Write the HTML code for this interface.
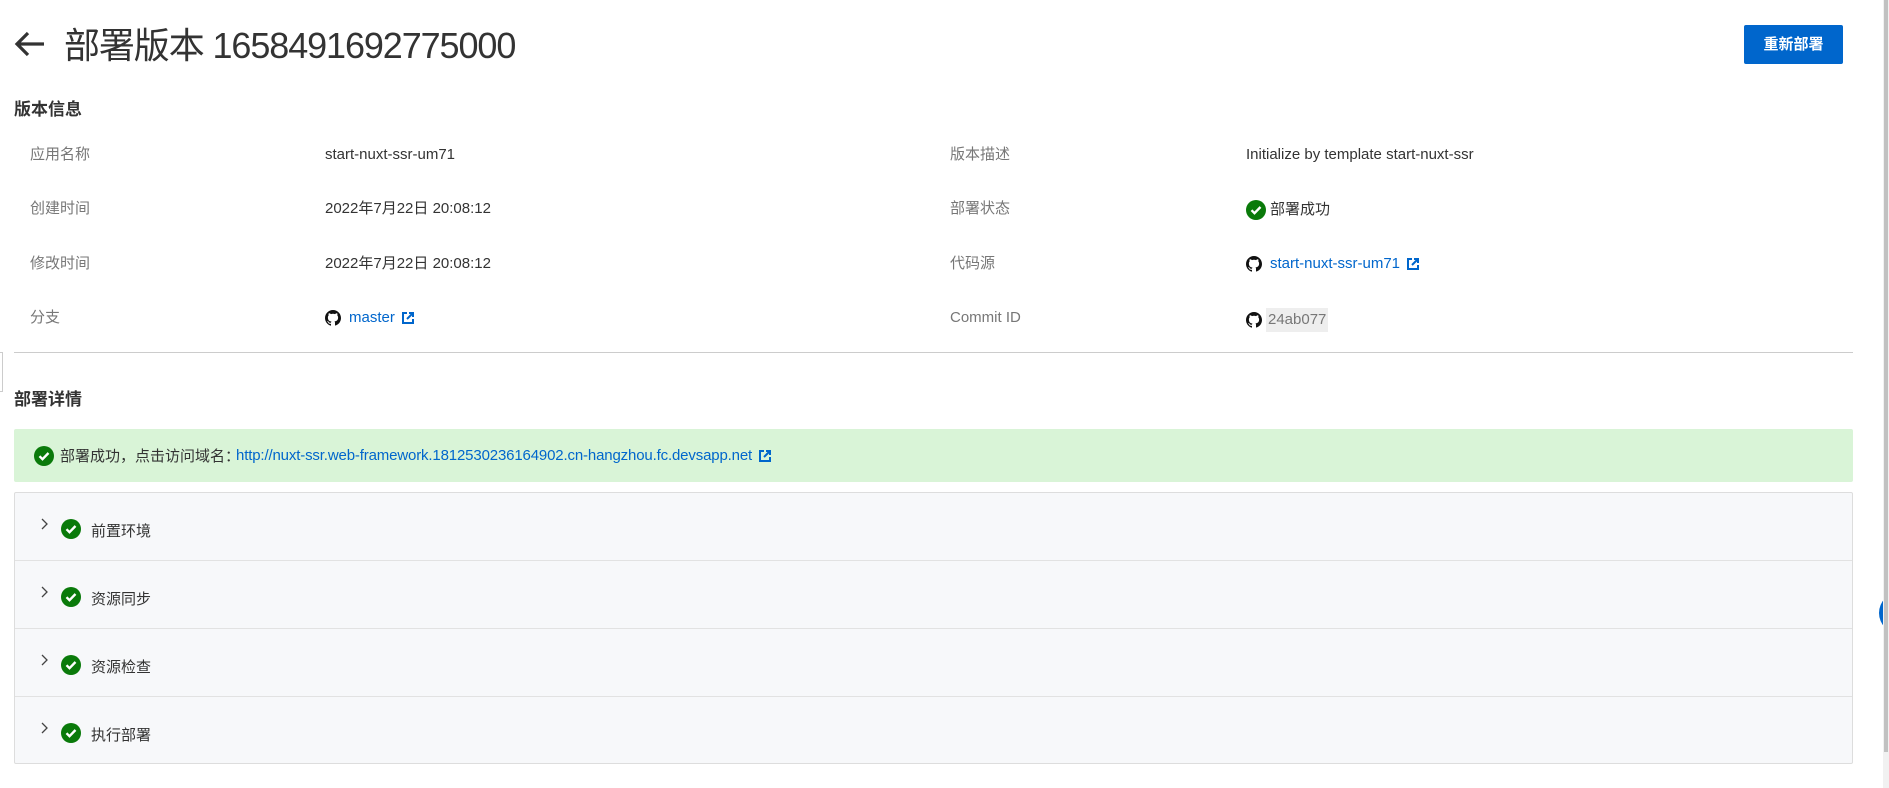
<!DOCTYPE html>
<html><head><meta charset="utf-8"><style>
*{box-sizing:border-box;margin:0;padding:0}
body{width:1889px;height:788px;overflow:hidden;background:#fff;font-family:"Liberation Sans","Noto Sans CJK SC",sans-serif;color:#333;position:relative}
.abs{position:absolute}
.title{left:64px;top:21px;font-size:36px;color:#333;line-height:50px;letter-spacing:-1.1px}
.btn{left:1744px;top:25px;width:99px;height:39px;background:#0066cc;color:#fff;font-size:15px;font-weight:bold;text-align:center;line-height:39px;border-radius:2px}
.h{font-size:17px;font-weight:bold;color:#333;left:14px}
.lbl{font-size:15px;color:#777;line-height:20px}
.val{font-size:15px;color:#333;line-height:20px;display:flex;align-items:center;gap:6px}
a{color:#0066cc;text-decoration:none}
.gh{width:16px;height:16px}
.ext{width:14px;height:14px}
.ok{width:20px;height:20px}
.acc{left:14px;top:492px;width:1839px;height:272px;border:1px solid #ddd;background:#f7f8fa;border-radius:2px}
.row{height:68px;border-bottom:1px solid #e2e2e2;position:relative}
.row:last-child{border-bottom:none}
.row .chev{position:absolute;left:24px;top:24px}
.row .ok{position:absolute;left:46px;top:26px}
.row span.t{position:absolute;left:76px;top:27px;font-size:15px;color:#333}
</style></head><body>
<svg class="abs" style="left:14px;top:30px" width="32" height="28" viewBox="0 0 32 28"><path d="M30 14H4M14 3L3 14l11 11" stroke="#333" stroke-width="3.2" fill="none"/></svg>
<div class="abs title">部署版本 1658491692775000</div>
<div class="abs btn">重新部署</div>
<div class="abs h" style="top:95px">版本信息</div>

<svg width="0" height="0" style="position:absolute"><defs>
<symbol id="gh" viewBox="0 0 16 16"><path fill="#111" d="M8 0C3.6 0 0 3.6 0 8c0 3.5 2.3 6.5 5.5 7.6.4.1.5-.2.5-.4v-1.4c-2.2.5-2.7-1-2.7-1-.4-.9-.9-1.2-.9-1.2-.7-.5.1-.5.1-.5.8.1 1.2.8 1.2.8.7 1.2 1.900.9 2.300.7.1-.5.3-.9.5-1.1-1.8-.2-3.6-.9-3.6-4 0-.9.3-1.6.8-2.1-.1-.2-.4-1 .1-2.1 0 0 .7-.2 2.2.8.6-.2 1.3-.3 2-.3s1.4.1 2 .3c1.5-1 2.2-.8 2.2-.8.4 1.1.2 1.9.1 2.1.5.6.8 1.3.8 2.1 0 3.1-1.9 3.700-3.6 3.900.3.3.5.8.5 1.5v2.2c0 .2.1.5.6.4C13.7 14.5 16 11.5 16 8c0-4.4-3.6-8-8-8z"/></symbol>
<symbol id="ext" viewBox="0 0 14 14"><path d="M6 2H2v10h10V8M8 2h4v4M12 2L6 8" stroke="#0066cc" stroke-width="2" fill="none"/></symbol>
<symbol id="ok" viewBox="0 0 20 20"><circle cx="10" cy="10" r="10" fill="#0a7a0a"/><path d="M5.5 10.2l3 3 6-6.2" stroke="#fff" stroke-width="2.4" fill="none"/></symbol>
<symbol id="chev" viewBox="0 0 10 14"><path d="M3 2l5 5-5 5" stroke="#444" stroke-width="1.3" fill="none"/></symbol>
</defs></svg>

<div class="abs lbl" style="left:30px;top:145px">应用名称</div>
<div class="abs val" style="left:325px;top:145px">start-nuxt-ssr-um71</div>
<div class="abs lbl" style="left:30px;top:199px">创建时间</div>
<div class="abs val" style="left:325px;top:199px">2022年7月22日 20:08:12</div>
<div class="abs lbl" style="left:30px;top:254px">修改时间</div>
<div class="abs val" style="left:325px;top:254px">2022年7月22日 20:08:12</div>
<div class="abs lbl" style="left:30px;top:308px">分支</div>
<div class="abs val" style="left:325px;top:308px"><svg class="gh"><use href="#gh"/></svg><a style="margin-left:2px">master</a><svg class="ext"><use href="#ext"/></svg></div>

<div class="abs lbl" style="left:950px;top:145px">版本描述</div>
<div class="abs val" style="left:1246px;top:145px">Initialize by template start-nuxt-ssr</div>
<div class="abs lbl" style="left:950px;top:199px">部署状态</div>
<div class="abs val" style="left:1246px;top:200px;gap:4px"><svg class="ok"><use href="#ok"/></svg>部署成功</div>
<div class="abs lbl" style="left:950px;top:254px">代码源</div>
<div class="abs val" style="left:1246px;top:254px"><svg class="gh"><use href="#gh"/></svg><a style="margin-left:2px">start-nuxt-ssr-um71</a><svg class="ext"><use href="#ext"/></svg></div>
<div class="abs lbl" style="left:950px;top:308px">Commit ID</div>
<div class="abs val" style="left:1246px;top:308px;gap:4px"><svg class="gh"><use href="#gh"/></svg><span style="background:#eee;color:#777;padding:2px 2px">24ab077</span></div>

<div class="abs" style="left:14px;top:352px;width:1839px;height:1px;background:#ccc"></div>
<div class="abs" style="left:0;top:352px;width:3px;height:40px;border:1px solid #ccc;border-left:none"></div>
<div class="abs h" style="top:385px">部署详情</div>

<div class="abs" style="left:14px;top:429px;width:1839px;height:53px;background:#d9f4d7;border-radius:2px;display:flex;align-items:center;padding-left:20px;font-size:15px;gap:6px"><svg class="ok"><use href="#ok"/></svg><span style="margin-right:-10px">部署成功，点击访问域名：</span><a style="letter-spacing:-0.15px">http://nuxt-ssr.web-framework.1812530236164902.cn-hangzhou.fc.devsapp.net</a><svg class="ext"><use href="#ext"/></svg></div>

<div class="abs acc">
<div class="row"><svg class="chev" width="10" height="14"><use href="#chev"/></svg><svg class="ok"><use href="#ok"/></svg><span class="t">前置环境</span></div>
<div class="row"><svg class="chev" width="10" height="14"><use href="#chev"/></svg><svg class="ok"><use href="#ok"/></svg><span class="t">资源同步</span></div>
<div class="row"><svg class="chev" width="10" height="14"><use href="#chev"/></svg><svg class="ok"><use href="#ok"/></svg><span class="t">资源检查</span></div>
<div class="row"><svg class="chev" width="10" height="14"><use href="#chev"/></svg><svg class="ok"><use href="#ok"/></svg><span class="t">执行部署</span></div>
</div>

<div class="abs" style="left:1879px;top:592px;width:42px;height:42px;border-radius:50%;background:#0066cc"></div>
<div class="abs" style="left:1883px;top:0;width:6px;height:788px;background:#f1f1f1"></div>
<div class="abs" style="left:1884px;top:0;width:4px;height:752px;background:#c1c1c1"></div>
</body></html>
